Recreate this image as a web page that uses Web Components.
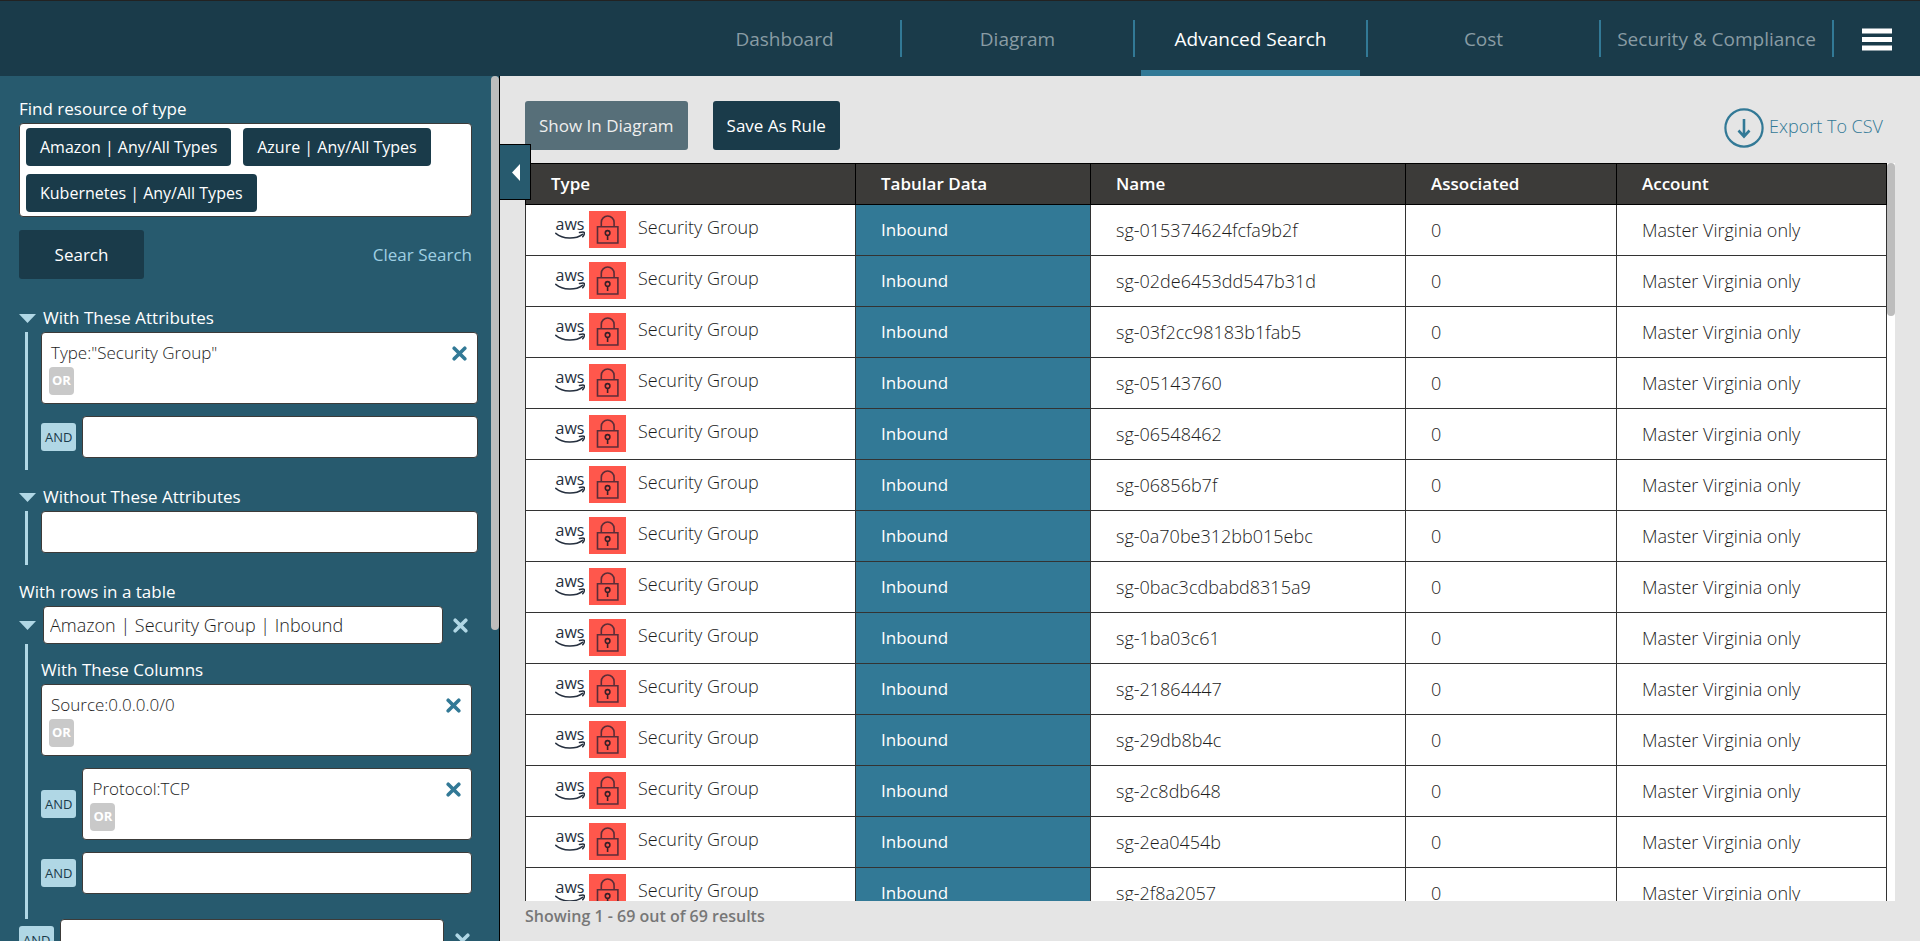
<!DOCTYPE html>
<html lang="en">
<head>
<meta charset="utf-8">
<title>Advanced Search</title>
<style>
  :root {
    --ink: #1a3b4a;
    --panel: #275a6e;
    --accent: #327996;
    --pale: #b0d7e5;
    --text: #1c1c1c;
  }
  body { margin: 0; background: #e5e5e5; color: var(--text); font: 400 17px/24px "Open Sans", sans-serif; }
</style>
</head>
<body>
<cloud-app></cloud-app>
<script>
const define = (name, html, setup) => {
  const template = document.createElement('template');
  template.innerHTML = `<style>
    *, *::before, *::after { box-sizing: border-box; }
    button, input { font: inherit; color: inherit; margin: 0; padding: 0; border: 0; }
    button { background: none; cursor: pointer; }
    svg { display: block; flex: none; }
  </style>` + html;
  customElements.define(name, class extends HTMLElement {
    constructor() {
      super();
      this.attachShadow({ mode: 'open' }).append(template.content.cloneNode(true));
      if (setup) setup(this, this.shadowRoot);
    }
  });
};

/* ---------- small parts ---------- */

define('close-button', `
  <style>
    :host { display: block; flex: none; color: var(--accent); }
    button { display: block; }
  </style>
  <button type="button" aria-label="Remove">
    <svg width="15" height="15" viewBox="0 0 15 15" fill="none" stroke="currentColor" stroke-width="3.6" stroke-linecap="round"><path d="M2.2 2.2 12.8 12.8M12.8 2.2 2.2 12.8"/></svg>
  </button>`);

define('and-badge', `
  <style>
    :host { display: block; flex: none; }
    button { height: 28px; padding: 0 4px; border-radius: 3px; background: var(--pale); color: var(--ink); font-size: 13px; line-height: 28px; display: block; }
  </style>
  <button type="button">AND</button>`);

define('text-field', `
  <style>
    :host { display: block; flex: 1; min-width: 0; height: 42px; color: var(--text); font-weight: 300; font-size: 18px; }
    :host([short]) { height: 38px; }
    input { display: block; width: 100%; height: 100%; padding: 0 6px; background: #fff; border: 1px solid #3c3b39; border-radius: 4px; outline: none; }
  </style>
  <input type="text">`, (host, root) => {
    const input = root.querySelector('input');
    input.setAttribute('aria-label', host.getAttribute('label') || 'Filter');
    input.setAttribute('value', host.getAttribute('value') || '');
  });

define('filter-box', `
  <style>
    :host { display: flex; flex: 1; justify-content: space-between; height: 72px; padding: 8px 10px 0 7px; background: #fff; border: 1px solid #3c3b39; border-radius: 4px; box-sizing: border-box; color: var(--text); }
    .term { padding-left: 2px; font-size: 17px; font-weight: 300; height: 26px; }
    .or { display: block; height: 28px; padding: 0 3px; border-radius: 4px; background: #c9c9c9; color: #fff; font-size: 13px; font-weight: 700; line-height: 26px; padding-bottom: 2px; }
    close-button { margin-top: 5px; }
  </style>
  <div><div class="term"><slot></slot></div><button class="or" type="button">OR</button></div>
  <close-button></close-button>`);

define('field-row', `
  <style>:host { display: flex; align-items: center; gap: 6px; }</style>
  <slot></slot>`);

define('fold-section', `
  <style>
    :host { display: block; margin-top: 15px; }
    .head { display: flex; align-items: center; gap: 7px; min-height: 24px; color: #fff; }
    .toggle { display: flex; align-items: center; gap: 7px; }
    ::slotted([slot=extra]) { flex: 1; }
    .body { display: grid; gap: 12px; margin: 2px -6px 0 6px; padding: 0 0 12px 13px; border-left: 3px solid var(--pale); }
    :host([nested]) .body { margin: 0 0 0 6px; padding: 14px 0 25px 13px; }
    :host([nested]) { margin-top: 2px; }
  </style>
  <div class="head">
    <button class="toggle" type="button" aria-label="Fold section">
      <svg width="17" height="9" viewBox="0 0 17 9"><path d="M0 0H17L8.500 9Z" fill="#b0d7e5"/></svg>
      <slot name="title"></slot>
    </button>
    <slot name="extra"></slot>
  </div>
  <div class="body"><slot></slot></div>`);

/* ---------- header ---------- */

define('top-bar', `
  <style>
    :host { display: flex; justify-content: flex-end; height: 76px; box-sizing: border-box; border-top: 1px solid #222; background: var(--ink); font-size: 19px; }
    nav { display: flex; }
    .slot { display: flex; width: 233px; }
    a { flex: 1; margin: 0 6px; padding-top: 7px; border-bottom: 6px solid transparent; display: flex; align-items: center; justify-content: center; color: #899ca4; text-decoration: none; white-space: nowrap; }
    a[aria-current] { color: #fff; border-color: var(--accent); }
    i { width: 2px; height: 37px; margin-top: 19px; background: var(--accent); }
    button { margin: 2px 28px 0; }
  </style>
  <nav aria-label="Main">
    <div class="slot"><a href="#dashboard">Dashboard</a><i></i></div>
    <div class="slot"><a href="#diagram">Diagram</a><i></i></div>
    <div class="slot"><a href="#search" aria-current="page">Advanced Search</a><i></i></div>
    <div class="slot"><a href="#cost">Cost</a><i></i></div>
    <div class="slot"><a href="#security">Security &amp; Compliance</a><i></i></div>
  </nav>
  <button type="button" aria-label="Menu">
    <svg width="30" height="23" viewBox="0 0 30 23" fill="#fff"><path d="M0 0.500h30v5H0zM0 9h30v5H0zM0 17.500h30v5H0z"/></svg>
  </button>`);

/* ---------- sidebar ---------- */

define('search-panel', `
  <style>
    :host { display: flex; flex: 0 0 500px; min-height: 0; box-sizing: border-box; border-right: 1px solid #000; background: var(--panel); color: #fff; }
    form { flex: 1; min-width: 0; overflow: hidden; padding: 21px 19px 0; }
    .bar { flex: none; width: 8px; display: flex; }
    .bar::before { content: ""; flex: 1; height: 64%; border-radius: 4px; background: #bdbdbd; }
    .lead { height: 26px; }
    .chips { display: flex; flex-wrap: wrap; gap: 8px 12px; padding: 4px 6px; background: #fff; border: 1px solid #3c3b39; border-radius: 4px; }
    .chips button { height: 38px; padding: 0 14px; border-radius: 4px; background: var(--ink); font-size: 16px; }
    .actions { display: flex; justify-content: space-between; align-items: center; margin: 13px 0 27px; }
    .search { width: 125px; height: 49px; border-radius: 3px; background: var(--ink); }
    .actions a { color: #9fcfe2; text-decoration: none; }
    .rows { margin-top: 15px; }
    close-button.light { color: var(--pale); margin: 0 4px 0 12px; }
    fold-section:first-of-type { margin-top: 0; }
    .extra { display: flex; align-items: center; }
    .extra text-field { margin-right: -2px; }
    .cols { margin-bottom: -10px; }
    .last close-button.light { margin: 0 2px 0 5px; }
  </style>
  <form onsubmit="return false">
    <div class="lead">Find resource of type</div>
    <div class="chips">
      <button type="button">Amazon | Any/All Types</button>
      <button type="button">Azure | Any/All Types</button>
      <button type="button">Kubernetes | Any/All Types</button>
    </div>
    <div class="actions"><button class="search" type="submit">Search</button><a href="#clear">Clear Search</a></div>

    <fold-section>
      <span slot="title">With These Attributes</span>
      <filter-box>Type:"Security Group"</filter-box>
      <field-row><and-badge></and-badge><text-field label="And attribute"></text-field></field-row>
    </fold-section>

    <fold-section>
      <span slot="title">Without These Attributes</span>
      <text-field label="Without attribute"></text-field>
    </fold-section>

    <div class="rows">With rows in a table</div>
    <fold-section nested>
      <div slot="extra" class="extra"><text-field short label="Table" value="Amazon | Security Group | Inbound"></text-field><close-button class="light"></close-button></div>
      <div class="cols">With These Columns</div>
      <filter-box>Source:0.0.0.0/0</filter-box>
      <field-row><and-badge></and-badge><filter-box>Protocol:TCP</filter-box></field-row>
      <field-row><and-badge></and-badge><text-field label="And column"></text-field></field-row>
    </fold-section>
    <field-row class="last"><and-badge></and-badge><text-field label="And table"></text-field><close-button class="light"></close-button></field-row>
  </form>
  <div class="bar"></div>`);

/* ---------- results ---------- */

define('resource-type', `
  <style>
    :host { display: flex; align-items: center; }
    .lock { margin: 0 12px 0 4px; }
    span { line-height: 24px; margin-bottom: 6px; }
    text { font: 500 16px "Open Sans", sans-serif; }
  </style>
  <svg width="30" height="20" viewBox="0 0 30 20" role="img"><text x="0.500" y="10" fill="#252f3e">aws</text><g fill="none" stroke="#252f3e" stroke-width="1.500" stroke-linecap="round"><path d="M.8 13.300C8 19.300 20.500 19.500 27.500 14.300"/><path d="M24.500 12.500C27 11.800 29 12 29.300 12.600 29.500 13.500 28.800 15.500 27.700 16.800"/></g></svg>
  <svg class="lock" width="37" height="37" viewBox="0 0 37 37"><path fill="#ff574c" d="M0 0h37v37H0z"/><g fill="none" stroke="#5c2d38" stroke-width="1.600"><path d="M8.500 15.800h20.400v16.200H8.500z"/><path d="M12.300 15.800V11.400a6.400 6.400 0 0 1 12.800 0V15.800"/><circle cx="18.600" cy="21.900" r="2.300" stroke="#3a2028"/><path d="M18.600 24.200V29" stroke="#3a2028"/></g></svg>
  <span>Security Group</span>`);

define('results-table', `
  <style>
    :host { display: flex; flex: 1; min-height: 0; overflow: hidden; background: #fff; font-size: 18px; font-weight: 300; }
    .scroll { flex: 1; min-width: 0; overflow: hidden; }
    .bar { flex: none; width: 8px; display: flex; }
    .bar::before { content: ""; flex: 1; height: 153px; border-radius: 4px; background: #bdbdbd; }
    table { width: 100%; table-layout: fixed; border-collapse: collapse; }
    th, td { padding: 0 0 0 25px; text-align: left; border: 1px solid #333; height: 51px; white-space: nowrap; }
    th { height: 41px; background: #3c3b39; color: #fff; font-weight: 600; font-size: 17px; border-color: #000; }
    .type { padding-left: 29px; padding-bottom: 1px; }
    .tab { background: var(--accent); color: #fff; font-weight: 400; font-size: 17px; }
  </style>
  <div class="scroll">
    <table>
      <colgroup><col style="width:330px"><col style="width:235px"><col style="width:315px"><col style="width:211px"><col style="width:270px"></colgroup>
      <thead><tr><th>Type</th><th>Tabular Data</th><th>Name</th><th>Associated</th><th>Account</th></tr></thead>
      <tbody></tbody>
    </table>
  </div>
  <div class="bar"></div>`, (host, root) => {
    const ids = ['015374624fcfa9b2f', '02de6453dd547b31d', '03f2cc98183b1fab5', '05143760', '06548462', '06856b7f', '0a70be312bb015ebc', '0bac3cdbabd8315a9', '1ba03c61', '21864447', '29db8b4c', '2c8db648', '2ea0454b', '2f8a2057'];
    root.querySelector('tbody').innerHTML = ids.map(id => `<tr><td class="type"><resource-type></resource-type></td><td class="tab">Inbound</td><td>sg-${id}</td><td>0</td><td>Master Virginia only</td></tr>`).join('');
  });

define('results-panel', `
  <style>
    :host { position: relative; display: flex; flex: 1; min-width: 0; flex-direction: column; padding: 25px 25px 0; box-sizing: border-box; }
    .tools { display: flex; gap: 25px; height: 49px; margin-bottom: 13px; color: #fff; }
    .tools button { padding: 0 14px; border-radius: 3px; background: var(--ink); }
    .tools .off { background: #576f79; color: #eee; }
    .tools a { display: flex; align-items: center; gap: 5px; margin: 0 12px 0 auto; color: var(--accent); font-weight: 300; font-size: 18px; text-decoration: none; }
    .tools svg { margin-top: 5px; }
    .count { padding: 3px 0 13px; color: #777; font-size: 16px; font-weight: 600; }
    .fold { position: absolute; left: 0; top: 68px; width: 31px; height: 56px; padding-left: 12px; border: 1px solid #000; border-left: 0; background: var(--panel); }
  </style>
  <div class="tools">
    <button class="off" type="button">Show In Diagram</button>
    <button type="button">Save As Rule</button>
    <a href="#csv"><svg width="40" height="40" viewBox="0 0 40 40" fill="none" stroke="#327996" stroke-width="2.200"><circle cx="20" cy="20" r="18.600"/><path d="M20 11v17M14.500 22.500l5.500 6 5.500-6" stroke-width="2.600"/></svg><span>Export To CSV</span></a>
  </div>
  <results-table></results-table>
  <div class="count">Showing 1 - 69 out of 69 results</div>
  <button class="fold" type="button" aria-label="Collapse panel"><svg width="8" height="17" viewBox="0 0 8 17"><path d="M8 0V17L0 8.500Z" fill="#fff"/></svg></button>`);

define('cloud-app', `
  <style>
    :host { display: flex; flex-direction: column; height: 100vh; overflow: hidden; }
    main { display: flex; flex: 1; min-height: 0; }
  </style>
  <top-bar></top-bar>
  <main><search-panel></search-panel><results-panel></results-panel></main>`);
</script>
</body>
</html>
